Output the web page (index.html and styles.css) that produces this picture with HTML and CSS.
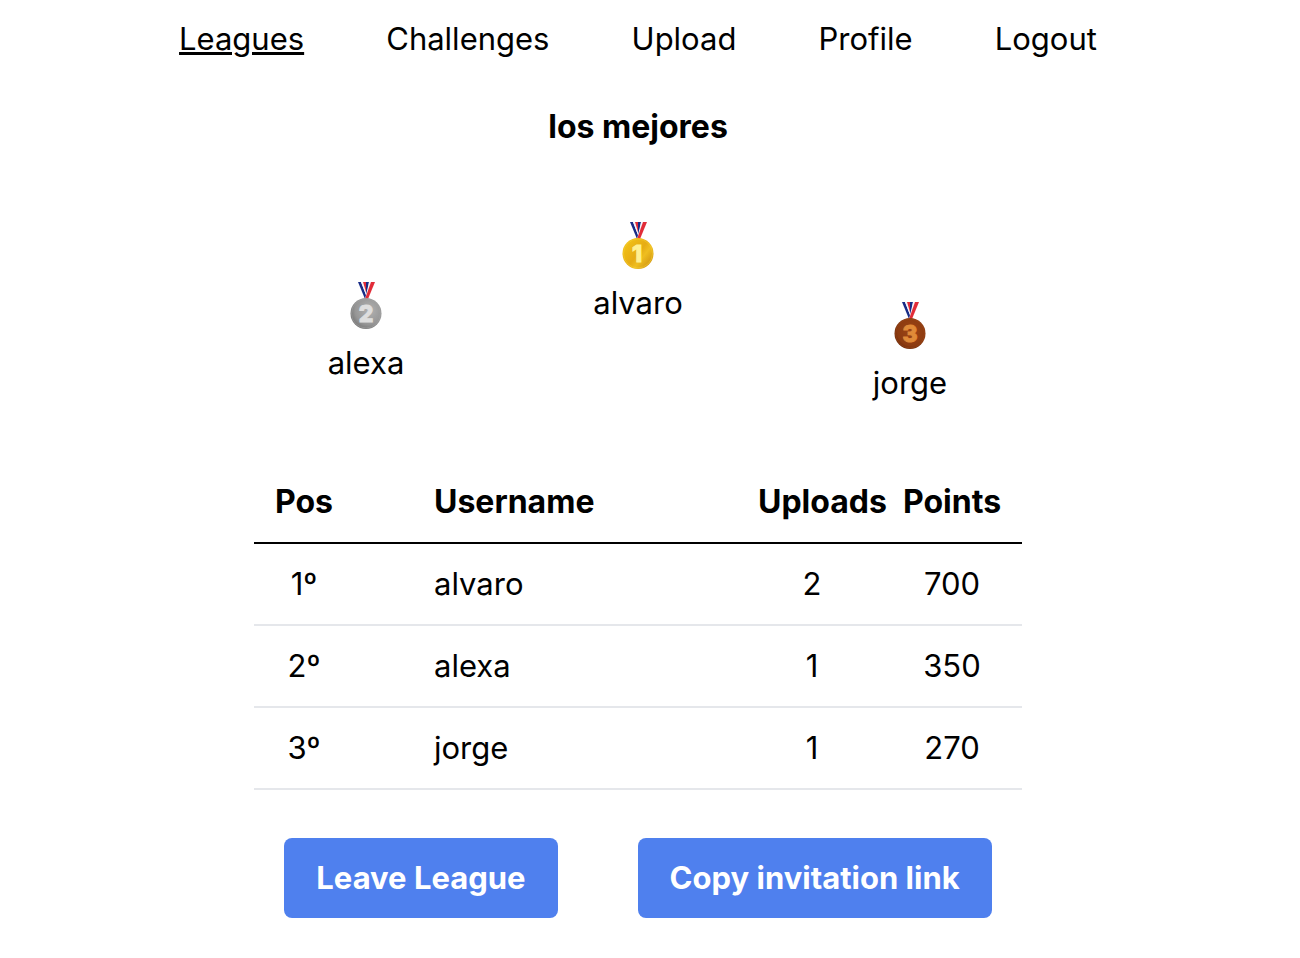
FILE: index.html
```html
<!DOCTYPE html>
<html lang="en">
<head>
    <meta charset="UTF-8">
    <meta name="viewport" content="width=device-width, initial-scale=1.0">
    <title>los mejores</title>
    <link rel="stylesheet" href="styles.css">
</head>
<body>
    <nav class="navbar">
        <a class="active" href="/leagues">Leagues</a>
        <a href="/challenges">Challenges</a>
        <a href="/upload">Upload</a>
        <a href="/profile">Profile</a>
        <a href="/logout">Logout</a>
    </nav>

    <main>
        <h1>los mejores</h1>

        <div class="podium">
            <div class="place second">
                <svg class="medal" viewBox="0 0 32 48" aria-hidden="true">
                    <defs>
                        <radialGradient id="silver" cx="0.6" cy="0.4" r="0.6">
                            <stop offset="0" stop-color="#b2b2b2"/>
                            <stop offset="0.75" stop-color="#969696"/>
                            <stop offset="1" stop-color="#7c7c7c"/>
                        </radialGradient>
                    </defs>
                    <path fill="#172b86" d="M8 0h3l5 13-1 4z"/>
                    <path fill="#f4f4fa" d="M11 0h2l4 10-1 3z"/>
                    <path fill="#e12c38" d="M13 0h3l1 7-1 3z"/>
                    <path fill="#172b86" d="M16 0h3l-1 8-2 5z"/>
                    <path fill="#f4f4fa" d="M19 0h2l-4 14-1-1z"/>
                    <path fill="#e12c38" d="M21 0h4l-7 17h-3z"/>
                    <circle cx="16" cy="31.500" r="15.500" fill="url(#silver)"/>
                    <circle cx="16" cy="31.500" r="14.500" fill="none" stroke="#a6a6a6" stroke-width="0.500"/>
                    <text class="digit" x="16" y="40" fill="#dedede" stroke="#dedede">2</text>
                </svg>
                <span>alexa</span>
            </div>
            <div class="place first">
                <svg class="medal" viewBox="0 0 32 48" aria-hidden="true">
                    <defs>
                        <linearGradient id="gold" x1="0" y1="0.1" x2="1" y2="0.9">
                            <stop offset="0" stop-color="#f3c416"/>
                            <stop offset="0.5" stop-color="#e6ac14"/>
                            <stop offset="0.65" stop-color="#efbe20"/>
                            <stop offset="1" stop-color="#c98a0c"/>
                        </linearGradient>
                    </defs>
                    <path fill="#172b86" d="M8 0h3l5 13-1 4z"/>
                    <path fill="#f4f4fa" d="M11 0h2l4 10-1 3z"/>
                    <path fill="#e12c38" d="M13 0h3l1 7-1 3z"/>
                    <path fill="#172b86" d="M16 0h3l-1 8-2 5z"/>
                    <path fill="#f4f4fa" d="M19 0h2l-4 14-1-1z"/>
                    <path fill="#e12c38" d="M21 0h4l-7 17h-3z"/>
                    <circle cx="16" cy="31.500" r="15.500" fill="url(#gold)"/>
                    <circle cx="16" cy="31.500" r="14.500" fill="none" stroke="#f5d23a" stroke-width="0.500"/>
                    <text class="digit" x="15" y="40" fill="#fff091" stroke="#fff091">1</text>
                </svg>
                <span>alvaro</span>
            </div>
            <div class="place third">
                <svg class="medal" viewBox="0 0 32 48" aria-hidden="true">
                    <defs>
                        <radialGradient id="bronze" cx="0.55" cy="0.45" r="0.6">
                            <stop offset="0" stop-color="#9c4516"/>
                            <stop offset="0.75" stop-color="#8d3b10"/>
                            <stop offset="1" stop-color="#662708"/>
                        </radialGradient>
                    </defs>
                    <path fill="#172b86" d="M8 0h3l5 13-1 4z"/>
                    <path fill="#f4f4fa" d="M11 0h2l4 10-1 3z"/>
                    <path fill="#e12c38" d="M13 0h3l1 7-1 3z"/>
                    <path fill="#172b86" d="M16 0h3l-1 8-2 5z"/>
                    <path fill="#f4f4fa" d="M19 0h2l-4 14-1-1z"/>
                    <path fill="#e12c38" d="M21 0h4l-7 17h-3z"/>
                    <circle cx="16" cy="31.500" r="15.500" fill="url(#bronze)"/>
                    <circle cx="16" cy="31.500" r="14.500" fill="none" stroke="#a04a1a" stroke-width="0.500"/>
                    <text class="digit" x="16" y="40" fill="#e08a38" stroke="#e08a38">3</text>
                </svg>
                <span>jorge</span>
            </div>
        </div>

        <table class="ranking">
            <thead>
                <tr>
                    <th class="pos">Pos</th>
                    <th class="username">Username</th>
                    <th class="number">Uploads</th>
                    <th class="number">Points</th>
                </tr>
            </thead>
            <tbody>
                <tr>
                    <td>1º</td>
                    <td class="username">alvaro</td>
                    <td>2</td>
                    <td>700</td>
                </tr>
                <tr>
                    <td>2º</td>
                    <td class="username">alexa</td>
                    <td>1</td>
                    <td>350</td>
                </tr>
                <tr>
                    <td>3º</td>
                    <td class="username">jorge</td>
                    <td>1</td>
                    <td>270</td>
                </tr>
            </tbody>
        </table>

        <div class="actions">
            <button type="button">Leave League</button>
            <button type="button">Copy invitation link</button>
        </div>
    </main>
</body>
</html>
```
FILE: styles.css
```css
* {
    box-sizing: border-box;
}
body {
    margin: 0;
    padding: 15px 24px 40px 0;
    font-family: Inter, "Liberation Sans", sans-serif;
    font-size: 31px;
    line-height: 48px;
    color: #000;
    background-color: #fff;
}
.navbar {
    display: flex;
    justify-content: space-around;
    max-width: 1000px;
    margin: 0 auto;
}
.navbar a {
    color: #000;
    text-decoration: none;
}
.navbar a:hover,
.navbar a.active {
    text-decoration: underline;
    text-decoration-thickness: 3px;
    text-underline-offset: 2px;
}
h1 {
    margin: 40px 0 64px;
    font-size: 32px;
    font-weight: 700;
    text-align: center;
}
.podium {
    display: grid;
    grid-template-columns: repeat(3, 1fr);
    max-width: 816px;
    height: 247px;
    margin: 0 auto;
}
.place {
    display: flex;
    flex-direction: column;
    align-items: center;
    gap: 9px;
}
.first {
    padding-top: 7px;
}
.second {
    padding-top: 67px;
}
.third {
    padding-top: 87px;
}
.medal {
    width: 32px;
    height: 48px;
}
.digit {
    font-size: 23px;
    font-weight: 800;
    stroke-width: 1px;
    text-anchor: middle;
}
.ranking {
    width: 100%;
    max-width: 768px;
    margin: 0 auto;
    table-layout: fixed;
    border-collapse: collapse;
    text-align: center;
}
.ranking th,
.ranking td {
    padding: 16px;
    white-space: nowrap;
    border-bottom: 2px solid #e5e7eb;
}
.ranking th {
    font-size: 32px;
    font-weight: 700;
    border-color: #000;
}
.ranking .pos {
    width: 100px;
}
.ranking .number {
    width: 140px;
}
.ranking .username {
    padding-left: 80px;
    text-align: left;
}
.actions {
    display: flex;
    justify-content: center;
    gap: 80px;
    margin-top: 48px;
}
button {
    padding: 16px 32px;
    font: inherit;
    font-weight: 700;
    color: #fff;
    background-color: #4f80ee;
    border: none;
    border-radius: 8px;
    cursor: pointer;
}
button:hover {
    background-color: #2563eb;
}
```
